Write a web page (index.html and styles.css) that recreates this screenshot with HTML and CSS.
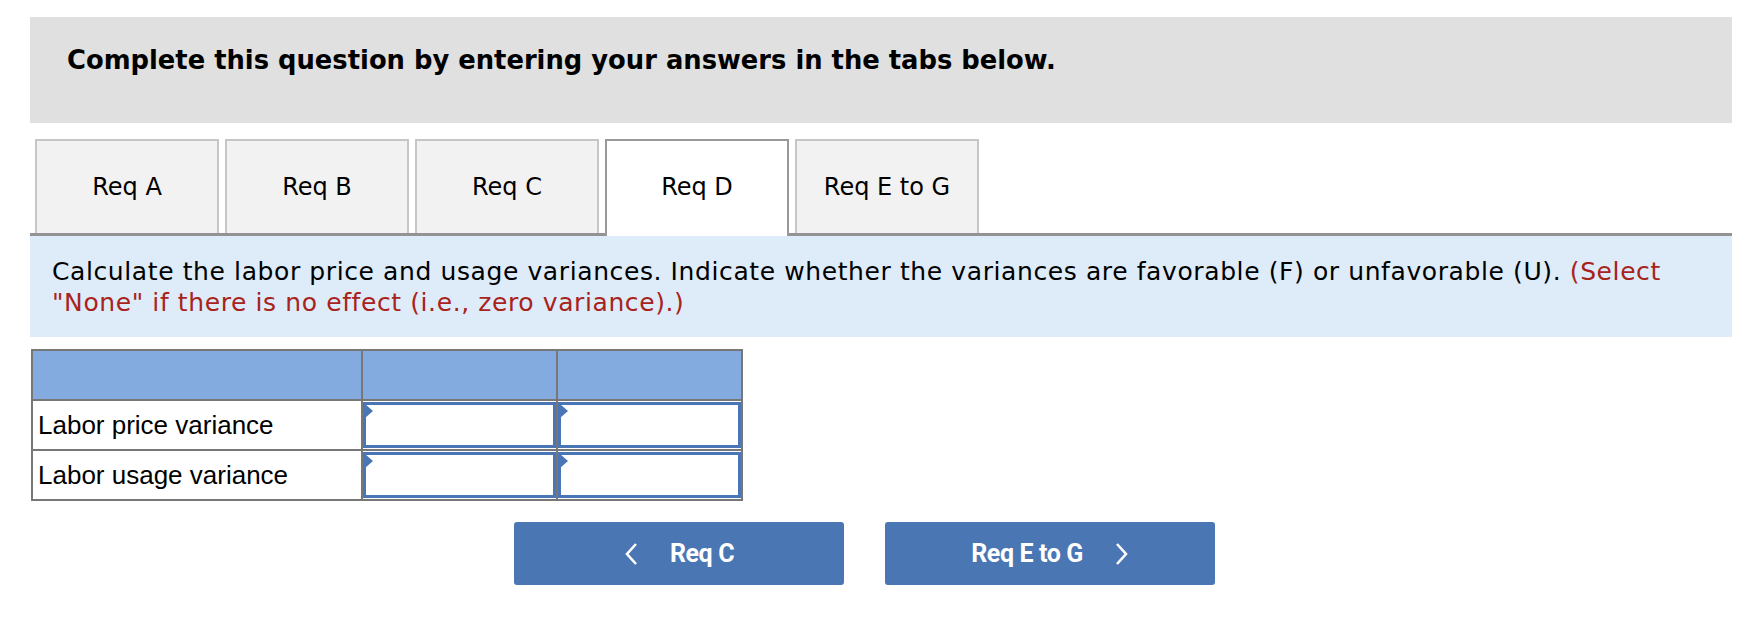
FILE: index.html
```html
<!DOCTYPE html>
<html lang="en">
<head>
    <meta charset="UTF-8">
    <meta name="viewport" content="width=device-width, initial-scale=1.0">
    <title>Req D</title>
    <link rel="stylesheet" href="styles.css">
</head>
<body>
    <div class="page">
        <div class="header">
            <h2>Complete this question by entering your answers in the tabs below.</h2>
        </div>

        <div class="tabs">
            <div class="tab">Req A</div>
            <div class="tab">Req B</div>
            <div class="tab">Req C</div>
            <div class="tab active">Req D</div>
            <div class="tab">Req E to G</div>
        </div>

        <div class="instructions">
            Calculate the labor price and usage variances. Indicate whether the variances are favorable (F) or unfavorable (U).
            <span class="hint">(Select "None" if there is no effect (i.e., zero variance).)</span>
        </div>

        <table class="answer-table">
            <tr class="head-row">
                <th class="col-label"></th>
                <th class="col-input"></th>
                <th class="col-input2"></th>
            </tr>
            <tr>
                <td class="label">Labor price variance</td>
                <td class="input-cell"><div class="input"></div></td>
                <td class="input-cell"><div class="input"></div></td>
            </tr>
            <tr>
                <td class="label">Labor usage variance</td>
                <td class="input-cell"><div class="input"></div></td>
                <td class="input-cell"><div class="input"></div></td>
            </tr>
        </table>

        <div class="nav">
            <button class="nav-btn">
                <svg class="chev" width="14" height="24" viewBox="0 0 14 24"><polyline points="12,2 3,12 12,22" fill="none" stroke="#fff" stroke-width="2.6"/></svg>
                <span>Req C</span>
            </button>
            <button class="nav-btn">
                <span>Req E to G</span>
                <svg class="chev" width="14" height="24" viewBox="0 0 14 24"><polyline points="2,2 11,12 2,22" fill="none" stroke="#fff" stroke-width="2.6"/></svg>
            </button>
        </div>
    </div>
</body>
</html>
```

FILE: styles.css
```css
* {
    margin: 0;
    padding: 0;
    box-sizing: border-box;
}

body {
    font-family: 'DejaVu Sans', Verdana, sans-serif;
    background: #fff;
    color: #000;
}

.page {
    padding: 17px 8px 0 30px;
}

.header {
    background-color: #e0e0e0;
    height: 106px;
    padding: 27px 0 0 37px;
}

.header h2 {
    font-size: 25.8px;
    font-weight: bold;
    line-height: 32px;
}

.tabs {
    display: flex;
    gap: 6px;
    margin-top: 16px;
    padding-left: 5px;
    border-bottom: 3px solid #939393;
}

.tab {
    width: 184px;
    height: 94px;
    display: flex;
    justify-content: center;
    align-items: center;
    background-color: #f2f2f2;
    border: 2px solid #c6c6c6;
    border-bottom: none;
    font-size: 24px;
}

.tab.active {
    background-color: #fff;
    border-color: #999;
    margin-bottom: -3px;
    height: 97px;
    padding-bottom: 3px;
}

.instructions {
    background-color: #deebf8;
    padding: 20px 40px 19px 22px;
    font-size: 25px;
    letter-spacing: 0.6px;
    line-height: 31px;
}

.hint {
    color: #a8231c;
}

.answer-table {
    margin-top: 12px;
    margin-left: 1px;
    border-collapse: collapse;
    font-family: 'Liberation Sans', Arial, sans-serif;
    font-size: 26px;
}

.answer-table th,
.answer-table td {
    border: 2px solid #777;
    height: 50px;
    padding: 0;
}

.head-row th {
    background-color: #84abdf;
}

.col-label {
    width: 330px;
}

.col-input {
    width: 195px;
}

.col-input2 {
    width: 185px;
}

.label {
    padding-left: 5px !important;
    text-align: left;
}

.input {
    height: 46px;
    border: 3px solid #4a76b5;
    background: #fff;
    position: relative;
}

.input::before {
    content: "";
    position: absolute;
    left: -1px;
    top: -1px;
    border-top: 7px solid transparent;
    border-bottom: 7px solid transparent;
    border-left: 8px solid #4a76b5;
}

.nav {
    display: flex;
    gap: 41px;
    margin-top: 21px;
    padding-left: 484px;
}

.nav-btn {
    width: 330px;
    height: 63px;
    background-color: #4a76b4;
    border: none;
    border-radius: 3px;
    color: #fff;
    font-family: Roboto, 'Liberation Sans', sans-serif;
    font-weight: bold;
    font-size: 25px;
    letter-spacing: -0.4px;
    display: flex;
    justify-content: center;
    align-items: center;
    gap: 32px;
}

.chev {
    display: block;
}
```
